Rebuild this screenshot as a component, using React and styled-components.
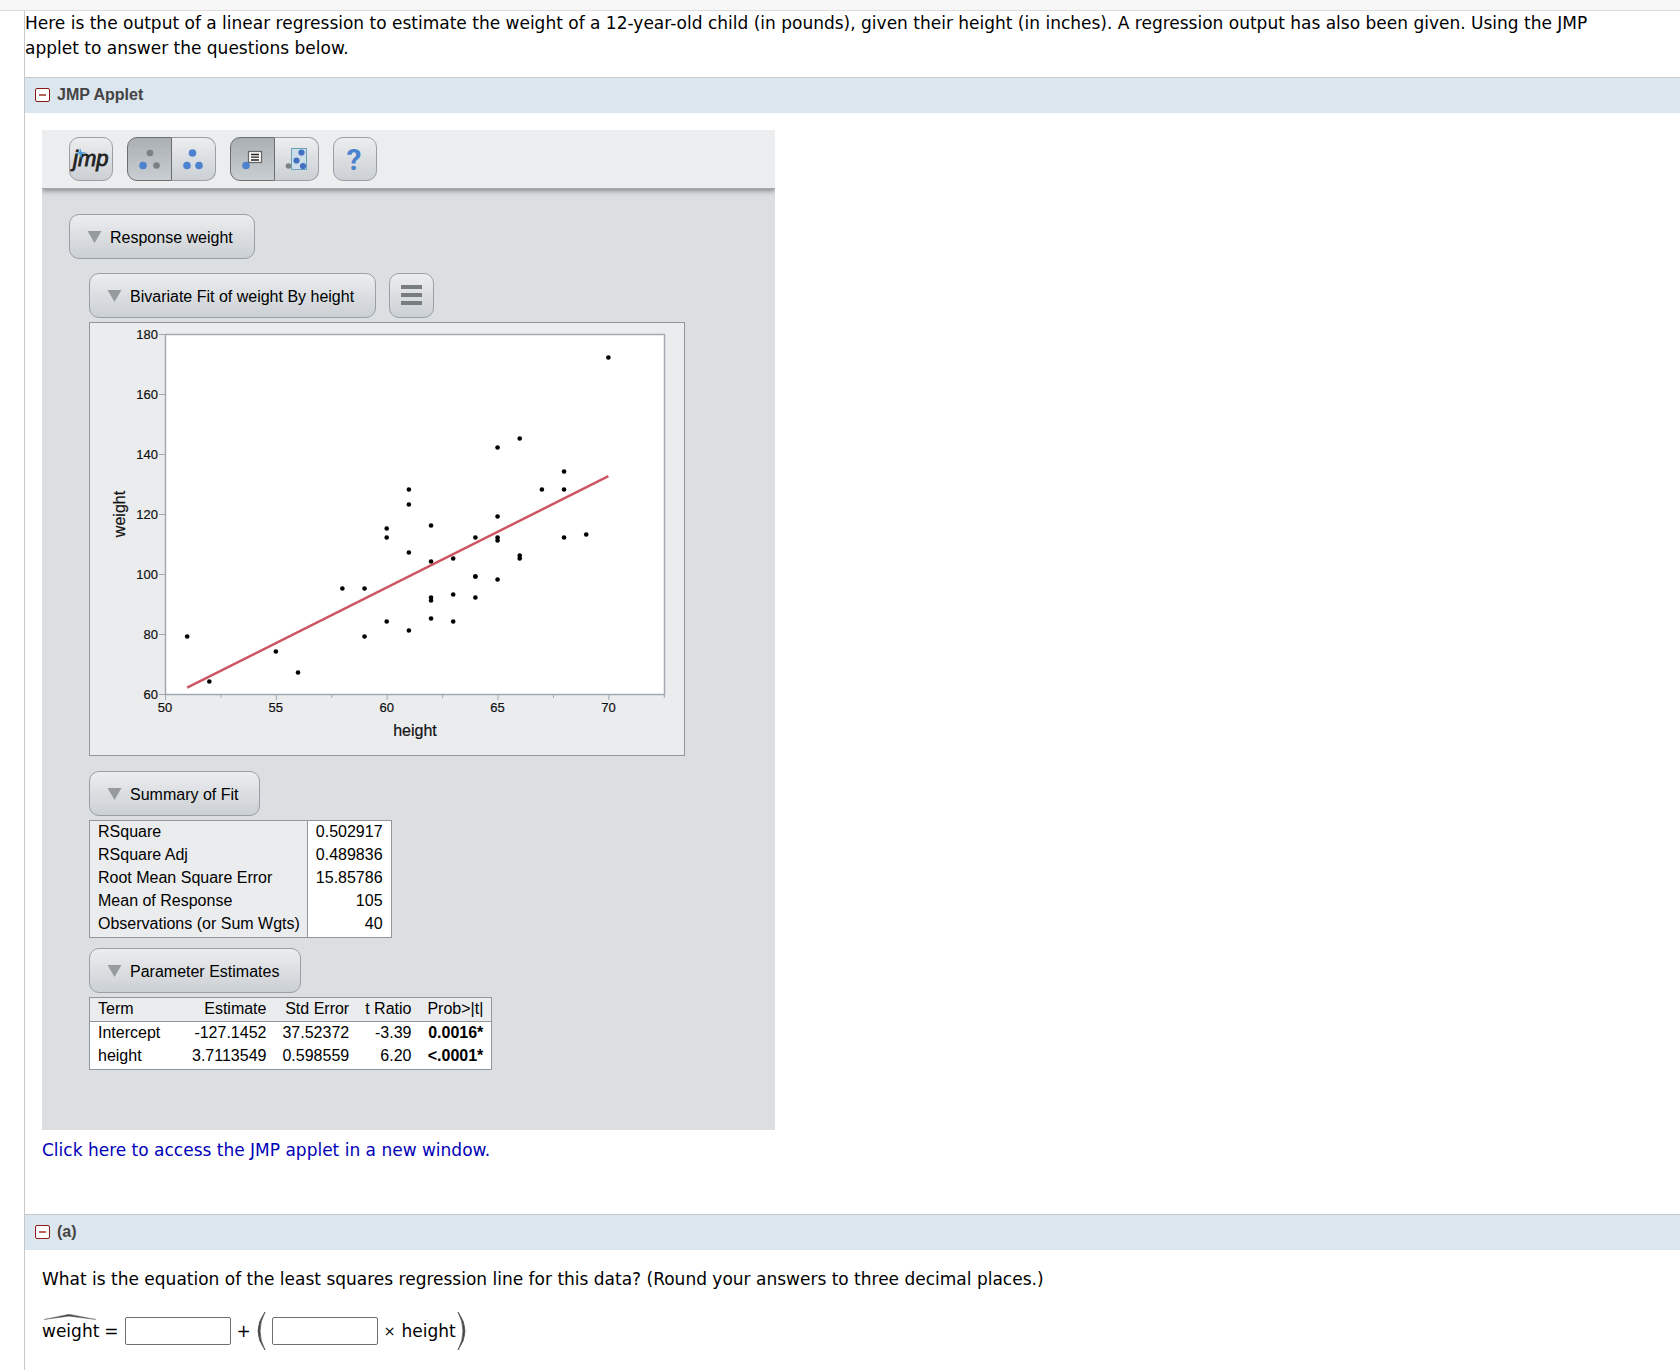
import React from "react";
import styled, { createGlobalStyle } from "styled-components";

const GlobalStyle = createGlobalStyle`
  body {
    margin: 0;
    background-color: #fff;
    color: #000;
    font-family: Verdana, "DejaVu Sans", sans-serif;
    font-size: 17px;
    line-height: 25px;
  }

  *, *::before, *::after {
    box-sizing: border-box;
  }
`;

const TopBar = styled.div`
  height: 11px;
  background-color: #f7f7f7;
  border-bottom: 1px solid #ddd;
`;

const Question = styled.main`
  margin-left: 24px;
  border-left: 1px solid #c8c8c8;
  min-height: calc(100vh - 11px);
`;

const Intro = styled.p`
  margin: 0;
  padding: 0 60px 16px 0;
`;

const SectionHeader = styled.h2`
  display: flex;
  align-items: center;
  gap: 7px;
  height: 36px;
  margin: 0;
  padding: 0 0 2px 10px;
  background-color: #dce6ee;
  border-top: 1px solid #c8c8c8;
  color: #444;
  font-family: "Liberation Sans", Arial, sans-serif;
  font-size: 16px;
  font-weight: bold;
`;

const Collapse = styled.button`
  display: flex;
  align-items: center;
  justify-content: center;
  width: 15px;
  height: 14px;
  padding: 0;
  background-color: #fff;
  border: 1px solid #8c1a15;
  border-radius: 2px;

  &::after {
    content: "";
    width: 7px;
    height: 2px;
    background-color: #b9625d;
  }
`;

const SectionBody = styled.div`
  padding: ${props => props.padding || "17px"};
`;

const Applet = styled.div`
  width: 733px;
  max-width: 100%;
  min-height: 1000px;
  background-color: #dcdfe2;
  font-family: "Liberation Sans", Arial, sans-serif;
  font-size: 16px;
  line-height: 22px;
`;

const Toolbar = styled.div`
  display: flex;
  gap: 14px;
  height: 59px;
  padding: 7px 27px;
  background-color: #ebedef;
  border-bottom: 1px solid #a5a9ac;
  box-shadow: 0 2px 5px #85898c;
  clip-path: inset(0 0 -10px 0);
`;

const ButtonGroup = styled.div`
  display: flex;
`;

const ToolButton = styled.button`
  width: ${props => (props.$active ? "45px" : "44px")};
  height: 44px;
  padding: 0;
  border: 1px solid ${props => (props.$active ? "#6a6e71" : "#999fa4")};
  border-radius: ${props => props.$radius || "10px"};
  border-left-width: ${props => (props.$joined ? "0" : "1px")};
  background: ${props =>
    props.$active
      ? "linear-gradient(#a9afb2, #c9ced2)"
      : "linear-gradient(#ecedef, #cbd0d4)"};

  svg {
    display: block;
  }
`;

const Report = styled.div`
  padding: 25px 27px;
`;

const Indented = styled.div`
  padding: 14px 0 0 20px;
`;

const HeadingRow = styled.div`
  display: flex;
  gap: 13px;
  margin-bottom: 4px;
`;

const Disclosure = styled.button`
  display: flex;
  align-items: center;
  gap: 8px;
  height: 45px;
  padding: 0 21px 0 17px;
  border: 1px solid #999fa4;
  border-radius: 10px;
  background: linear-gradient(#ecedef, #cbd0d4);
  color: #000;
  font-family: inherit;
  font-size: 16px;
  line-height: 22px;

  span {
    padding-top: 2px;
  }
`;

const MenuButton = styled(Disclosure)`
  width: 45px;
  justify-content: center;
  padding: 0 0 2px;
`;

const ChartFrame = styled.div`
  width: 596px;
  max-width: 100%;
  margin-bottom: 15px;
  background-color: #ebecee;
  border: 1px solid #8f969c;

  svg {
    display: block;
    width: 100%;
    font-family: inherit;
  }
`;

const DataTable = styled.table`
  margin-bottom: 10px;
  border: 1px solid #8f969c;
  border-collapse: separate;
  border-spacing: 0;
  background-color: #fff;
  line-height: 22px;

  th,
  td {
    padding: 0 8px 1px;
    font-weight: normal;
    text-align: right;
    white-space: nowrap;
  }

  th:first-child {
    text-align: left;
  }
`;

const FitTable = styled(DataTable)`
  th {
    background-color: #ebecee;
    border-right: 1px solid #8f969c;
    padding-right: 7px;
  }

  tbody tr:last-child > * {
    padding-bottom: 2px;
  }
`;

const EstimateTable = styled(DataTable)`
  thead th {
    background-color: #ebecee;
    border-bottom: 1px solid #8f969c;
  }

  th:first-child {
    width: 94px;
  }

  td:last-child {
    font-weight: bold;
  }

  tbody tr:last-child > * {
    padding-bottom: 2px;
  }
`;

const AppletLink = styled.a`
  display: inline-block;
  margin-top: 8px;
  color: #0000b8;
  text-decoration: none;
`;

const Prompt = styled.p`
  margin: 0 0 20px;
`;

const Formula = styled.div`
  display: flex;
  align-items: center;
  gap: 6px;
  height: 38px;
`;

const Estimated = styled.span`
  position: relative;

  svg {
    position: absolute;
    top: -5px;
    left: 2px;
  }
`;

const Grouped = styled.div`
  display: flex;
  align-items: center;
  gap: ${props => props.gap || "6px"};
`;

const Times = styled.span`
  font-size: 14px;
`;

const Answer = styled.input`
  width: 106px;
  height: 28px;
  padding: 2px 4px;
  border: 1px solid #6f6f6f;
  border-radius: 2px;
  font-family: inherit;
  font-size: 17px;
`;

const points = [
  [51, 79], [52, 64], [55, 74], [56, 67], [58, 95], [59, 95], [59, 79],
  [60, 115], [60, 112], [60, 84], [61, 128], [61, 123], [61, 107], [61, 81],
  [62, 116], [62, 104], [62, 92], [62, 91], [62, 85], [63, 105], [63, 93],
  [63, 84], [64, 112], [64, 99], [64, 99], [64, 92], [65, 142], [65, 119],
  [65, 112], [65, 111], [65, 98], [66, 145], [66, 106], [66, 105], [67, 128],
  [68, 134], [68, 128], [68, 112], [69, 113], [70, 172]
];

const summary = [
  ["RSquare", "0.502917"],
  ["RSquare Adj", "0.489836"],
  ["Root Mean Square Error", "15.85786"],
  ["Mean of Response", "105"],
  ["Observations (or Sum Wgts)", "40"]
];

const estimates = [
  ["Intercept", "-127.1452", "37.52372", "-3.39", "0.0016*"],
  ["height", "3.7113549", "0.598559", "6.20", "<.0001*"]
];

const scaleX = height => 75 + (height - 50) * 22.17;
const scaleY = weight => 371 - (weight - 60) * 3;

const ScatterPlot = () => (
  <svg viewBox="0 0 594 432" role="img" aria-label="weight by height">
    <rect x="75.5" y="11.5" width="499" height="360" fill="#fff" stroke="#a3a9b0" strokeWidth="1.5" />
    {[60, 80, 100, 120, 140, 160, 180].map(tick => (
      <g key={tick}>
        <path d={`M69 ${scaleY(tick) + 0.5}h6`} stroke="#a3a9b0" />
        <text x="68" y={scaleY(tick) + 5} textAnchor="end" fontSize="13" fill="#111" stroke="#111" strokeWidth="0.2">
          {tick}
        </text>
      </g>
    ))}
    {[50, 55, 60, 65, 70].map(tick => (
      <g key={tick}>
        <path d={`M${scaleX(tick) + 0.5} 372v5`} stroke="#a3a9b0" />
        <path d={`M${scaleX(tick + 2.5) + 0.5} 372v3`} stroke="#a3a9b0" />
        <text x={scaleX(tick)} y="389" textAnchor="middle" fontSize="13" fill="#111" stroke="#111" strokeWidth="0.2">
          {tick}
        </text>
      </g>
    ))}
    {points.map(([height, weight], i) => (
      <circle key={i} cx={scaleX(height)} cy={scaleY(weight) - 0.5} r="2.3" fill="#000" />
    ))}
    <path
      d={`M${scaleX(51)} ${scaleY(62.1)}L${scaleX(70)} ${scaleY(132.6)}`}
      stroke="#cb5662"
      strokeWidth="2.5"
    />
    <text x="325" y="413" textAnchor="middle" fontSize="16" fill="#111" stroke="#111" strokeWidth="0.2">
      height
    </text>
    <text transform="translate(35 191) rotate(-90)" textAnchor="middle" fontSize="16" fill="#111" stroke="#111" strokeWidth="0.2">
      weight
    </text>
  </svg>
);

const Dots = ({ items }) =>
  items.map(([x, y, color, r = 3.8], i) => (
    <circle key={i} cx={x} cy={y} r={r} fill={color} />
  ));

const Toggle = ({ label }) => (
  <Disclosure type="button">
    <svg width="15" height="12" viewBox="0 0 15 12" aria-hidden="true">
      <path d="M0.5 0h14L7.5 12z" fill="#969b9e" />
    </svg>
    <span>{label}</span>
  </Disclosure>
);

const blue = "#4d82d0";
const gray = "#7b8083";

const AppletToolbar = () => (
  <Toolbar>
    <ToolButton type="button" aria-label="jmp">
      <svg width="42" height="42" viewBox="0 0 42 42">
        <text x="3" y="28" fontSize="22" fontStyle="italic" fill="#222" stroke="#222" strokeWidth="0.8" fontFamily="Liberation Sans, Arial, sans-serif">
          jmp
        </text>
        <path d="M10 10l1.5 4 5 0.5-4.5 1.5-1 5-1.5-5-4.5-0.5 4.5-1.5z" fill="#4a9bd8" />
      </svg>
    </ToolButton>
    <ButtonGroup>
      <ToolButton type="button" $active $radius="10px 0 0 10px" aria-label="Select one">
        <svg width="43" height="42" viewBox="0 0 43 42">
          <Dots items={[[22, 15, gray, 3.3], [15, 27.5, blue], [28.5, 27.5, gray, 3.3]]} />
        </svg>
      </ToolButton>
      <ToolButton type="button" $joined $radius="0 10px 10px 0" aria-label="Select many">
        <svg width="42" height="42" viewBox="0 0 42 42">
          <Dots items={[[20.5, 15, blue], [15, 27.5, blue], [27, 27.5, blue]]} />
        </svg>
      </ToolButton>
    </ButtonGroup>
    <ButtonGroup>
      <ToolButton type="button" $active $radius="10px 0 0 10px" aria-label="Show labels">
        <svg width="43" height="42" viewBox="0 0 43 42">
          <Dots items={[[15, 27.5, blue]]} />
          <rect x="17.5" y="13.5" width="13" height="11" fill="#fff" stroke="#686868" strokeWidth="1.3" />
          <path d="M20 16.5h8M20 19.2h8M20 22h8" stroke="#222" strokeWidth="1.3" />
        </svg>
      </ToolButton>
      <ToolButton type="button" $joined $radius="0 10px 10px 0" aria-label="Area select">
        <svg width="42" height="42" viewBox="0 0 42 42">
          <rect x="16.5" y="10.5" width="15" height="21" fill="#cddde8" stroke="#6ba3bd" />
          <Dots items={[[13.5, 28, gray, 2.8], [26.5, 14.5, "#4270c0", 3.1], [21.5, 22.5, "#4270c0", 3.1], [28, 28, "#4270c0", 3.1]]} />
        </svg>
      </ToolButton>
    </ButtonGroup>
    <ToolButton type="button" aria-label="Help">
      <svg width="42" height="42" viewBox="0 0 42 42">
        <text x="20" y="32" textAnchor="middle" fontSize="30" fontWeight="bold" fill="#4a82cf" fontFamily="Roboto, Arial, sans-serif">
          ?
        </text>
      </svg>
    </ToolButton>
  </Toolbar>
);

const App = () => {
  return (
    <>
      <GlobalStyle />
      <TopBar />
      <Question>
        <Intro>
          Here is the output of a linear regression to estimate the weight of a
          12-year-old child (in pounds), given their height (in inches). A
          regression output has also been given. Using the JMP applet to answer
          the questions below.
        </Intro>
        <SectionHeader>
          <Collapse type="button" aria-label="Collapse JMP Applet" />
          JMP Applet
        </SectionHeader>
        <SectionBody padding="17px 17px 51px">
          <Applet>
            <AppletToolbar />
            <Report>
              <Toggle label="Response weight" />
              <Indented>
                <HeadingRow>
                  <Toggle label="Bivariate Fit of weight By height" />
                  <MenuButton type="button" aria-label="Fit options">
                    <svg width="21" height="20" viewBox="0 0 21 20">
                      <path d="M0 2h21M0 10h21M0 18h21" stroke="#787d80" strokeWidth="4" />
                    </svg>
                  </MenuButton>
                </HeadingRow>
                <ChartFrame>
                  <ScatterPlot />
                </ChartFrame>
                <HeadingRow>
                  <Toggle label="Summary of Fit" />
                </HeadingRow>
                <FitTable>
                  <tbody>
                    {summary.map(([label, value]) => (
                      <tr key={label}>
                        <th scope="row">{label}</th>
                        <td>{value}</td>
                      </tr>
                    ))}
                  </tbody>
                </FitTable>
                <HeadingRow>
                  <Toggle label="Parameter Estimates" />
                </HeadingRow>
                <EstimateTable>
                  <thead>
                    <tr>
                      <th scope="col">Term</th>
                      <th scope="col">Estimate</th>
                      <th scope="col">Std Error</th>
                      <th scope="col">t Ratio</th>
                      <th scope="col">Prob&gt;|t|</th>
                    </tr>
                  </thead>
                  <tbody>
                    {estimates.map(([term, ...values]) => (
                      <tr key={term}>
                        <th scope="row">{term}</th>
                        {values.map(value => (
                          <td key={value}>{value}</td>
                        ))}
                      </tr>
                    ))}
                  </tbody>
                </EstimateTable>
              </Indented>
            </Report>
          </Applet>
          <AppletLink href="#applet">
            Click here to access the JMP applet in a new window.
          </AppletLink>
        </SectionBody>
        <SectionHeader>
          <Collapse type="button" aria-label="Collapse (a)" />
          (a)
        </SectionHeader>
        <SectionBody>
          <Prompt>
            What is the equation of the least squares regression line for this
            data? (Round your answers to three decimal places.)
          </Prompt>
          <Formula>
            <Grouped gap="5px">
              <Estimated>
                weight
                <svg width="52" height="6" viewBox="0 0 52 6" aria-hidden="true">
                  <path d="M0 5.5L25 0.2 52 5.5 25 2.2z" fill="#444" stroke="#777" strokeWidth="0.5" />
                </svg>
              </Estimated>
              <span>=</span>
            </Grouped>
            <Answer type="text" aria-label="Intercept" />
            <span>+</span>
            <Grouped>
              <svg width="9" height="38" viewBox="0 0 9 38" aria-hidden="true">
                <path d="M8 0Q-6 19 8 38Q-2 19 8 0z" fill="#444" stroke="#555" strokeWidth="0.8" />
              </svg>
              <Answer type="text" aria-label="Slope" />
              <Times>×</Times>
              <Grouped gap="1px">
                height
                <svg width="9" height="38" viewBox="0 0 9 38" aria-hidden="true">
                  <path d="M1 0Q15 19 1 38Q11 19 1 0z" fill="#444" stroke="#555" strokeWidth="0.8" />
                </svg>
              </Grouped>
            </Grouped>
          </Formula>
        </SectionBody>
      </Question>
    </>
  );
};

export default App;
